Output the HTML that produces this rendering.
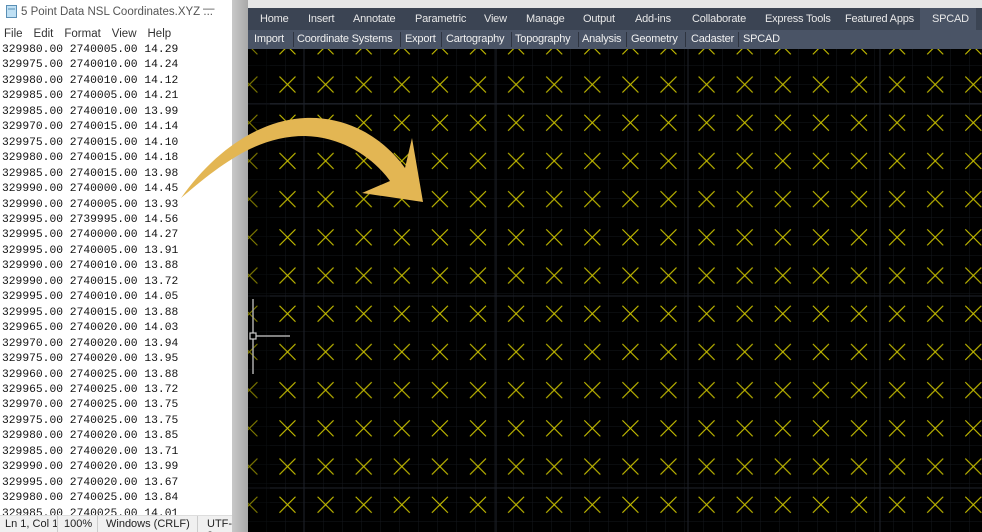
<!DOCTYPE html>
<html><head><meta charset="utf-8"><style>
*{margin:0;padding:0;box-sizing:border-box}
body{width:982px;height:532px;overflow:hidden;background:#e6e6e6;position:relative;font-family:"Liberation Sans",sans-serif}
#np{position:absolute;left:0;top:0;width:232px;height:532px;background:#fff;overflow:hidden}
#np .title{position:absolute;left:0;top:0;width:232px;height:24px;background:#fff;font-size:11.5px;color:#555}
#np .title span{position:absolute;left:21px;top:6px}
#np .menu{position:absolute;top:28px;left:4px;font-size:11.5px;color:#333;word-spacing:0}
#np .menu span{margin-right:11px}
#np pre{position:absolute;left:2px;top:43px;font-family:"Liberation Mono",monospace;font-size:11.3px;line-height:15.45px;color:#111}
#np .status{position:absolute;left:0;top:515px;width:232px;height:17px;background:#f0f0f0;border-top:1px solid #ddd;font-size:11px;color:#222}
#np .status span{position:absolute;top:2px}
#shadow{position:absolute;left:232px;top:0;width:16px;height:532px;background:linear-gradient(90deg,#c8c8c8,#a8a8a8)}
#cad{position:absolute;left:248px;top:8px;width:734px;height:524px;background:#000}
.tabs{position:absolute;left:0;top:0;width:734px;height:22px;background:#3b4453;font-size:11px;letter-spacing:-0.2px;color:#e8e8e8}
.tabs span{position:absolute;top:5px}
.sub{position:absolute;left:0;top:22px;width:734px;height:19px;background:#4a5466;font-size:11px;letter-spacing:-0.2px;color:#f0f0f0}
.sub span{position:absolute;top:3px}
.sub i{position:absolute;top:2px;width:1px;height:15px;background:#2e3440}
</style></head><body>
<div id="np">
<div class="title"><svg style="position:absolute;left:6px;top:5px" width="11" height="13"><rect x="0.5" y="0.5" width="10" height="12" fill="#bfe0f4" stroke="#5a8fb5"/><line x1="2" y1="4" x2="9" y2="4" stroke="#5a8fb5"/></svg><span>5 Point Data NSL Coordinates.XYZ ...</span><span style="left:203px;top:3px">—</span></div>
<div class="menu"><span>File</span><span>Edit</span><span>Format</span><span>View</span><span>Help</span></div>
<pre>329980.00 2740005.00 14.29
329975.00 2740010.00 14.24
329980.00 2740010.00 14.12
329985.00 2740005.00 14.21
329985.00 2740010.00 13.99
329970.00 2740015.00 14.14
329975.00 2740015.00 14.10
329980.00 2740015.00 14.18
329985.00 2740015.00 13.98
329990.00 2740000.00 14.45
329990.00 2740005.00 13.93
329995.00 2739995.00 14.56
329995.00 2740000.00 14.27
329995.00 2740005.00 13.91
329990.00 2740010.00 13.88
329990.00 2740015.00 13.72
329995.00 2740010.00 14.05
329995.00 2740015.00 13.88
329965.00 2740020.00 14.03
329970.00 2740020.00 13.94
329975.00 2740020.00 13.95
329960.00 2740025.00 13.88
329965.00 2740025.00 13.72
329970.00 2740025.00 13.75
329975.00 2740025.00 13.75
329980.00 2740020.00 13.85
329985.00 2740020.00 13.71
329990.00 2740020.00 13.99
329995.00 2740020.00 13.67
329980.00 2740025.00 13.84
329985.00 2740025.00 14.01</pre>
<div class="status"><span style="left:5px">Ln 1, Col 1</span><span style="left:57px;top:0;width:1px;height:17px;background:#ccc"></span><span style="left:64px">100%</span><span style="left:97px;top:0;width:1px;height:17px;background:#ccc"></span><span style="left:106px">Windows (CRLF)</span><span style="left:197px;top:0;width:1px;height:17px;background:#ccc"></span><span style="left:207px">UTF-8</span></div>
</div>
<div id="shadow"></div>
<div id="cad">
<div class="tabs"><span style="left:12px">Home</span><span style="left:60px">Insert</span><span style="left:105px">Annotate</span><span style="left:167px">Parametric</span><span style="left:236px">View</span><span style="left:278px">Manage</span><span style="left:335px">Output</span><span style="left:387px">Add-ins</span><span style="left:444px">Collaborate</span><span style="left:517px">Express Tools</span><span style="left:597px">Featured Apps</span><span style="left:672px;top:0;width:56px;height:22px;background:#4a5466"></span><span style="left:684px">SPCAD</span></div>
<div class="sub"><span style="left:6px">Import</span><i style="left:45px"></i><span style="left:49px">Coordinate Systems</span><i style="left:152px"></i><span style="left:157px">Export</span><i style="left:193px"></i><span style="left:198px">Cartography</span><i style="left:263px"></i><span style="left:267px">Topography</span><i style="left:330px"></i><span style="left:334px">Analysis</span><i style="left:378px"></i><span style="left:383px">Geometry</span><i style="left:437px"></i><span style="left:443px">Cadaster</span><i style="left:490px"></i><span style="left:495px">SPCAD</span></div>
<svg style="position:absolute;left:0;top:41px" width="734" height="483">
<defs>
<pattern id="g" x="0" y="0" width="19" height="19" patternUnits="userSpaceOnUse" patternTransform="translate(18,16)"><path d="M0 0H19M0 0V19" stroke="#15171d" stroke-width="1"/></pattern>
<pattern id="x" width="38.1" height="38.2" patternUnits="userSpaceOnUse" patternTransform="translate(1,1)"><path d="M30.5 26.5L46.5 42.5M46.5 26.5L30.5 42.5M-7.6 26.5L8.4 42.5M8.4 26.5L-7.6 42.5M30.5 -11.7L46.5 4.3M46.5 -11.7L30.5 4.3M-7.6 -11.7L8.4 4.3M8.4 -11.7L-7.6 4.3" stroke="#c8c000" stroke-width="1.1" fill="none"/></pattern>
</defs>
<rect width="734" height="483" fill="url(#g)"/>
<path d="M0 55H734M0 247H734M0 439H734M56 0V483M248 0V483M440 0V483M632 0V483" stroke="#1f232c" stroke-width="1"/>
<rect width="734" height="483" fill="url(#x)"/>
<rect x="0" y="0" width="22" height="483" fill="#000" opacity="0.35"/>
<path d="M5 250V325M5 287H42" stroke="#aaa" stroke-width="1.5"/>
<rect x="2" y="284" width="6" height="6" fill="#000" stroke="#ccc" stroke-width="1.2"/>
</svg>
</div>
<svg style="position:absolute;left:0;top:0" width="982" height="532">
<path d="M181 198 C215 150 260 120 305 118 C350 116 385 140 405 168 L412 138 L423 202 L362 193 L390 181 C375 160 345 137 305 136 C260 136 225 160 181 198 Z" fill="#e3b653"/>
</svg>
</body></html>
